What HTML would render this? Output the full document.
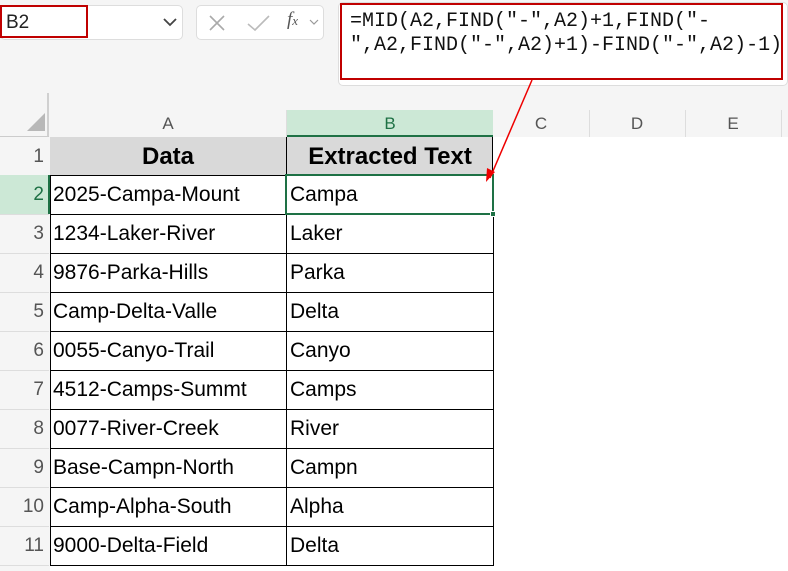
<!DOCTYPE html>
<html><head><style>
*{margin:0;padding:0;box-sizing:border-box}
body{width:788px;height:571px;background:#f5f5f5;position:relative;overflow:hidden;font-family:"Liberation Sans",sans-serif}
.a{position:absolute}
.cell{position:absolute;font-size:21px;color:#000;line-height:39px;padding-left:3px;white-space:nowrap}
.rh{position:absolute;left:0;width:44px;text-align:right;font-size:19px;color:#555;line-height:39px}
.ch{position:absolute;top:110px;height:27px;line-height:27px;text-align:center;font-size:17px;color:#555}
</style></head><body>
<div class="a" style="left:0;top:5px;width:183px;height:35px;background:#fff;border:1px solid #ddd;border-radius:5px"></div>
<div class="a" style="left:0;top:5px;width:88px;height:33px;border:2px solid #c00000"></div>
<div class="a" style="left:6px;top:12px;font-size:19px;color:#222">B2</div>
<svg class="a" style="left:162px;top:16px" width="16" height="12"><path d="M2 3 L8 9 L14 3" stroke="#444" stroke-width="1.8" fill="none"/></svg>
<div class="a" style="left:196px;top:5px;width:128px;height:35px;background:#fff;border:1px solid #ddd;border-radius:5px"></div>
<svg class="a" style="left:207px;top:13px" width="20" height="20"><path d="M3 3L17 17M17 3L3 17" stroke="#aaa" stroke-width="1.6"/></svg>
<svg class="a" style="left:246px;top:13px" width="26" height="20"><path d="M2 11L9 17L23 3" stroke="#bbb" stroke-width="1.6" fill="none"/></svg>
<div class="a" style="left:287px;top:9px;font-size:19px;font-style:italic;font-family:'Liberation Serif',serif;color:#555">f<span style="font-size:13px">x</span></div>
<svg class="a" style="left:309px;top:18px" width="10" height="8"><path d="M1 2L5 6L9 2" stroke="#999" stroke-width="1.2" fill="none"/></svg>
<div class="a" style="left:338px;top:2px;width:450px;height:84px;background:#fff;border-radius:5px;border:1px solid #ddd"></div>
<div class="a" style="left:340px;top:3px;width:443px;height:77px;border:2px solid #c00000"></div>
<div class="a" style="left:350px;top:10px;font-family:'Liberation Mono',monospace;font-size:20px;line-height:24px;color:#111;white-space:pre">=MID(A2,FIND("-",A2)+1,FIND("-
",A2,FIND("-",A2)+1)-FIND("-",A2)-1)</div>
<div class="a" style="left:47px;top:93px;width:2px;height:44px;background:#d0d0d0"></div>
<svg class="a" style="left:26px;top:112px" width="20" height="20"><path d="M19 1L19 19L1 19Z" fill="#b8b8b8"/></svg>
<div class="a" style="left:0;top:136px;width:49px;height:1px;background:#ccc"></div>
<div class="a" style="left:50px;top:137px;width:738px;height:434px;background:#fff"></div>
<div class="ch" style="left:50px;width:236px">A</div>
<div class="ch" style="left:287px;width:206px;background:#cce8d6;color:#1e7145;border-bottom:2px solid #1e7145">B</div>
<div class="ch" style="left:493px;width:96px">C</div>
<div class="ch" style="left:589px;width:96px">D</div>
<div class="ch" style="left:685px;width:96px">E</div>
<div class="a" style="left:286px;top:110px;width:1px;height:27px;background:#ddd"></div>
<div class="a" style="left:589px;top:110px;width:1px;height:27px;background:#ddd"></div>
<div class="a" style="left:685px;top:110px;width:1px;height:27px;background:#ddd"></div>
<div class="a" style="left:781px;top:110px;width:1px;height:27px;background:#ddd"></div>
<div class="a" style="left:0;top:175px;width:49px;height:39px;background:#cce8d6"></div>
<div class="a" style="left:48px;top:175px;width:2px;height:39px;background:#1e7145"></div>
<div class="rh" style="top:137px">1</div>
<div class="rh" style="top:175px;color:#1e7145">2</div>
<div class="rh" style="top:214px">3</div>
<div class="rh" style="top:253px">4</div>
<div class="rh" style="top:292px">5</div>
<div class="rh" style="top:331px">6</div>
<div class="rh" style="top:370px">7</div>
<div class="rh" style="top:409px">8</div>
<div class="rh" style="top:448px">9</div>
<div class="rh" style="top:487px">10</div>
<div class="rh" style="top:526px">11</div>
<div class="a" style="left:0;top:214px;width:49px;height:1px;background:#ddd;box-shadow:0 39px #ddd,0 78px #ddd,0 117px #ddd,0 156px #ddd,0 195px #ddd,0 234px #ddd,0 273px #ddd,0 312px #ddd,0 351px #ddd"></div>
<div class="a" style="left:50px;top:137px;width:443px;height:38px;background:#d9d9d9"></div>
<div class="a" style="left:50px;top:137px;width:236px;text-align:center;font-size:24px;font-weight:bold;line-height:40px">Data</div>
<div class="a" style="left:287px;top:137px;width:206px;text-align:center;font-size:24px;font-weight:bold;line-height:40px">Extracted Text</div>
<div class="a" style="left:50px;top:175px;width:444px;height:391px;border:1px solid #000;border-top:none"></div>
<div class="a" style="left:286px;top:137px;width:1px;height:429px;background:#000"></div>
<div class="a" style="left:492px;top:137px;width:1px;height:38px;background:#000"></div>
<div class="a" style="left:50px;top:175px;width:443px;height:1px;background:#000;box-shadow:0 39px #000,0 78px #000,0 117px #000,0 156px #000,0 195px #000,0 234px #000,0 273px #000,0 312px #000,0 351px #000"></div>
<div class="cell" style="left:50px;top:175px">2025-Campa-Mount</div><div class="cell" style="left:287px;top:175px">Campa</div>
<div class="cell" style="left:50px;top:214px">1234-Laker-River</div><div class="cell" style="left:287px;top:214px">Laker</div>
<div class="cell" style="left:50px;top:253px">9876-Parka-Hills</div><div class="cell" style="left:287px;top:253px">Parka</div>
<div class="cell" style="left:50px;top:292px">Camp-Delta-Valle</div><div class="cell" style="left:287px;top:292px">Delta</div>
<div class="cell" style="left:50px;top:331px">0055-Canyo-Trail</div><div class="cell" style="left:287px;top:331px">Canyo</div>
<div class="cell" style="left:50px;top:370px">4512-Camps-Summt</div><div class="cell" style="left:287px;top:370px">Camps</div>
<div class="cell" style="left:50px;top:409px">0077-River-Creek</div><div class="cell" style="left:287px;top:409px">River</div>
<div class="cell" style="left:50px;top:448px">Base-Campn-North</div><div class="cell" style="left:287px;top:448px">Campn</div>
<div class="cell" style="left:50px;top:487px">Camp-Alpha-South</div><div class="cell" style="left:287px;top:487px">Alpha</div>
<div class="cell" style="left:50px;top:526px">9000-Delta-Field</div><div class="cell" style="left:287px;top:526px">Delta</div>
<div class="a" style="left:285px;top:174px;width:209px;height:41px;border:2px solid #1e7145"></div>
<div class="a" style="left:490px;top:211px;width:6px;height:6px;background:#1e7145;border:1px solid #fff"></div>
<svg class="a" style="left:0;top:0" width="788" height="571"><path d="M532 80 L490 178" stroke="#e00" stroke-width="1.5"/><path d="M486 182 L487 168 L495 172 Z" fill="#e00"/></svg>
</body></html>
